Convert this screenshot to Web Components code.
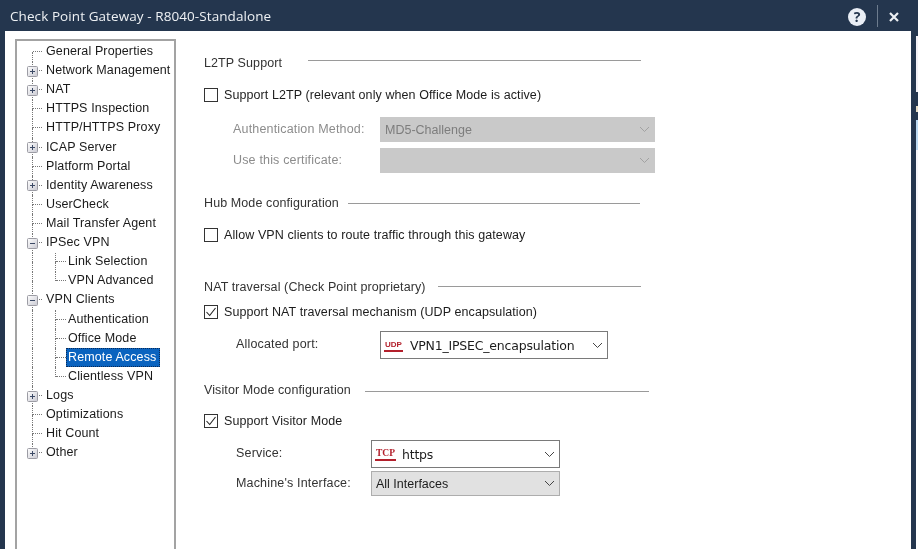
<!DOCTYPE html>
<html lang="en">
<head>
<meta charset="utf-8">
<title>Check Point Gateway - R8040-Standalone</title>
<style>
html, body { margin: 0; padding: 0; background: #fff; }
body { font-family: "Liberation Sans", Arial, sans-serif; }
</style>
</head>
<body>
<gateway-window>
  <span slot="title">Check Point Gateway - R8040-Standalone</span>
  <nav-tree slot="tree">
    <tree-row pos="first">General Properties</tree-row>
    <tree-row exp="plus">Network Management</tree-row>
    <tree-row exp="plus">NAT</tree-row>
    <tree-row>HTTPS Inspection</tree-row>
    <tree-row>HTTP/HTTPS Proxy</tree-row>
    <tree-row exp="plus">ICAP Server</tree-row>
    <tree-row>Platform Portal</tree-row>
    <tree-row exp="plus">Identity Awareness</tree-row>
    <tree-row>UserCheck</tree-row>
    <tree-row>Mail Transfer Agent</tree-row>
    <tree-row exp="minus">IPSec VPN</tree-row>
    <tree-row level="1">Link Selection</tree-row>
    <tree-row level="1" pos="last">VPN Advanced</tree-row>
    <tree-row exp="minus">VPN Clients</tree-row>
    <tree-row level="1">Authentication</tree-row>
    <tree-row level="1">Office Mode</tree-row>
    <tree-row level="1" selected>Remote Access</tree-row>
    <tree-row level="1" pos="last">Clientless VPN</tree-row>
    <tree-row exp="plus">Logs</tree-row>
    <tree-row>Optimizations</tree-row>
    <tree-row>Hit Count</tree-row>
    <tree-row exp="plus" pos="last">Other</tree-row>
  </nav-tree>

  <group-heading style="--line:333px;--gap:26px;--db:3px">L2TP Support</group-heading>
  <check-row style="margin-top:18px">Support L2TP (relevant only when Office Mode is active)</check-row>
  <form-row label="Authentication Method:" disabled style="margin-top:15px;--indent:29px;--label:147px;--lift:1px">
    <drop-down kind="disabled" style="--w:275px;--h:25px">MD5-Challenge</drop-down>
  </form-row>
  <form-row label="Use this certificate:" disabled style="margin-top:6px;--indent:29px;--label:147px;--lift:1px">
    <drop-down kind="disabled" style="--w:275px;--h:25px"></drop-down>
  </form-row>

  <group-heading style="margin-top:21px;--line:292px;--gap:9px;--dt:2px">Hub Mode configuration</group-heading>
  <check-row style="margin-top:18px">Allow VPN clients to route traffic through this gateway</check-row>

  <group-heading style="margin-top:36px;--line:203px;--gap:12px">NAT traversal (Check Point proprietary)</group-heading>
  <check-row checked style="margin-top:11px">Support NAT traversal mechanism (UDP encapsulation)</check-row>
  <form-row label="Allocated port:" style="margin-top:12px;--indent:32px;--label:144px;--lift:3px">
    <drop-down kind="white" proto="UDP" style="--w:228px;--h:28px">VPN1_IPSEC_encapsulation</drop-down>
  </form-row>

  <group-heading style="margin-top:22px;--line:284px;--gap:14px;--dt:4px">Visitor Mode configuration</group-heading>
  <check-row checked style="margin-top:17px">Support Visitor Mode</check-row>
  <form-row label="Service:" style="margin-top:12px;--indent:32px;--label:135px;--lift:3px">
    <drop-down kind="white" proto="TCP" style="--w:189px;--h:28px">https</drop-down>
  </form-row>
  <form-row label="Machine's Interface:" style="margin-top:3px;--indent:32px;--label:135px;--lift:1px">
    <drop-down kind="gray" style="--w:189px;--h:25px">All Interfaces</drop-down>
  </form-row>
</gateway-window>

<script>
class GatewayWindow extends HTMLElement {
  constructor() {
    super();
    this.attachShadow({ mode: "open" });
    this.shadowRoot.innerHTML = `
      <style>
        :host { display: flex; flex-direction: column; width: 918px; height: 549px; overflow: hidden; background: #fff; }
        .bar { flex: none; height: 31px; display: flex; align-items: center; background: #24364e; color: #eef1f4;
               font: 13.5px "Open Sans", sans-serif; padding: 0 0 0 10px; }
        .title { flex: 1; letter-spacing: .08px; filter: blur(.35px); }
        .help { width: 18px; height: 18px; border-radius: 50%; background: #e9eef5; color: #24364e; display: flex;
                align-items: center; justify-content: center; font: bold 14px "Open Sans", sans-serif; margin-top: 2px; filter: blur(.35px); }
        .sep { width: 1px; height: 22px; background: #6d7c8e; margin: 0 11px 0 11px; }
        .close { display: block; margin: 2px 19px 0 0; filter: blur(.35px); }
        .main { flex: 1; min-height: 0; display: flex; }
        .edge { flex: none; width: 5px; background: #24364e; }
        .content { flex: 1; min-width: 0; display: flex; background: #fff; filter: blur(.35px); }
        .tree { flex: none; padding: 8px 0 0 10px; }
        .panel { flex: 1; min-width: 0; padding: 23px 0 0 28px; color: #1c1c1c; }
        .strip { flex: none; width: 2px; display: flex; flex-direction: column; margin-top: 0; }
        .strip i { display: block; }
      </style>
      <div class="bar">
        <div class="title"><slot name="title"></slot></div>
        <div class="help">?</div>
        <div class="sep"></div>
        <svg class="close" width="10" height="10" viewBox="0 0 10 10"><path d="M1 1 9 9M9 1 1 9" stroke="#eef1f4" stroke-width="2.2" fill="none"/></svg>
      </div>
      <div class="main">
        <div class="edge"></div>
        <div class="content">
          <div class="tree"><slot name="tree"></slot></div>
          <div class="panel"><slot></slot></div>
        </div>
        <div class="edge"></div>
        <div class="strip">
          <i style="height:5px;background:#24364e"></i>
          <i style="height:56px;background:#f3f1f6"></i>
          <i style="height:14px;background:#24364e"></i>
          <i style="height:6px;background:#e9dfc8"></i>
          <i style="height:8px;background:#24364e"></i>
          <i style="height:30px;background:#bcd9f2"></i>
          <i style="height:270px;background:#f7f6fa"></i>
          <i style="flex:1;background:#fff"></i>
        </div>
      </div>`;
  }
}

class NavTree extends HTMLElement {
  constructor() {
    super();
    this.attachShadow({ mode: "open" });
    this.shadowRoot.innerHTML = `
      <style>
        :host { display: block; box-sizing: border-box; width: 161px; height: 530px; background: #fff;
                border: 2px solid #a3a3a3; border-bottom: 0; padding: 1.5px 0 0 6px;
                font: 12.5px "Liberation Sans", Arial, sans-serif; color: #1a1a1a; }
      </style>
      <slot></slot>`;
  }
}

class TreeRow extends HTMLElement {
  constructor() {
    super();
    this.attachShadow({ mode: "open" });
    const level = this.getAttribute("level") === "1";
    const exp = this.getAttribute("exp");
    // the top level line runs past the children, so level 1 rows get a plain guide first
    const guide = level ? `<div class="cell pass"><b class="tl"></b><b class="bl"></b></div>` : "";
    const mark = exp
      ? `<svg class="exp" width="11" height="11" viewBox="0 0 11 11">
           <defs><linearGradient id="g" x1="0" y1="0" x2="1" y2="1"><stop offset="0" stop-color="#fff"/><stop offset="1" stop-color="#c9c9d2"/></linearGradient></defs>
           <rect x=".5" y=".5" width="10" height="10" rx="1" fill="url(#g)" stroke="#9c9ca4"/>
           <path d="${exp === "plus" ? "M3 5.5h5M5.5 3v5" : "M3 5.5h5"}" stroke="#3c4a66"/>
         </svg>`
      : "";
    this.shadowRoot.innerHTML = `
      <style>
        :host { display: flex; height: 19.12px; align-items: stretch; }
        .cell { flex: none; width: 21px; display: grid; grid-template-columns: 10px 9px; grid-template-rows: 1fr 1fr; }
        .cell.pass { width: 22px; }
        .cell.sub { grid-template-columns: 11px 10px; }
        b { display: block; box-sizing: border-box; }
        .tl { grid-area: 1 / 1; border-right: 1px dotted #777; }
        .tr { grid-area: 1 / 2; border-bottom: 1px dotted #777; }
        .bl { grid-area: 2 / 1; border-right: 1px dotted #777; }
        :host([pos=first]) .main .tl, :host([pos=last]) .main .bl { border-right-color: transparent; }
        .exp { grid-area: 1 / 1 / 3 / 3; align-self: center; justify-self: start; margin-left: 4px; z-index: 1; }
        .label { align-self: center; white-space: nowrap; padding: 1px 2px 2px; line-height: 15px; letter-spacing: .12px; }
        :host([selected]) .label { background: #0a63bf; color: #fff; outline: 1px dotted #0b2a55; outline-offset: -1px; padding: 2px 4px 2px 2px; }
      </style>
      ${guide}
      <div class="cell main ${level ? "sub" : ""}">
        <b class="tl"></b><b class="tr"></b><b class="bl"></b>
        ${mark}
      </div>
      <div class="label"><slot></slot></div>`;
  }
}

class GroupHeading extends HTMLElement {
  constructor() {
    super();
    this.attachShadow({ mode: "open" });
    this.shadowRoot.innerHTML = `
      <style>
        :host { display: flex; align-items: center; height: 16px; color: #333; font: 12.5px "Liberation Sans", Arial, sans-serif; letter-spacing: .1px; }
        span { margin-top: 2px; }
        i { display: block; height: 1px; width: var(--line); margin: var(--dt, 0) 0 var(--db, 0) var(--gap); background: #9a9a9a; }
      </style>
      <span><slot></slot></span><i></i>`;
  }
}

class CheckRow extends HTMLElement {
  constructor() {
    super();
    this.attachShadow({ mode: "open" });
    const tick = this.hasAttribute("checked") ? `<path d="M2.5 7 5.700 10.500 11.500 3" stroke="#222" stroke-width="1.100" fill="none"/>` : "";
    this.shadowRoot.innerHTML = `
      <style>
        :host { display: flex; align-items: center; height: 14px; gap: 6px; color: #1c1c1c; font: 12.5px "Liberation Sans", Arial, sans-serif; letter-spacing: .09px; white-space: nowrap; }
        svg { flex: none; }
      </style>
      <svg width="14" height="14" viewBox="0 0 14 14"><rect x=".5" y=".5" width="13" height="13" fill="#fff" stroke="#333"/>${tick}</svg>
      <span><slot></slot></span>`;
  }
}

class FormRow extends HTMLElement {
  constructor() {
    super();
    this.attachShadow({ mode: "open" });
    this.shadowRoot.innerHTML = `
      <style>
        :host { display: flex; align-items: center; padding-left: var(--indent); color: #333; font: 12.5px "Liberation Sans", Arial, sans-serif; white-space: nowrap; }
        :host([disabled]) { color: #8c8c8c; }
        .lab { flex: none; width: var(--label); margin-bottom: var(--lift, 3px); letter-spacing: .17px; }
      </style>
      <div class="lab"></div><slot></slot>`;
    this.shadowRoot.querySelector(".lab").textContent = this.getAttribute("label");
  }
}

class DropDown extends HTMLElement {
  constructor() {
    super();
    this.attachShadow({ mode: "open" });
    const proto = this.getAttribute("proto");
    this.shadowRoot.innerHTML = `
      <style>
        :host { display: flex; align-items: center; box-sizing: border-box; width: var(--w); height: var(--h); padding: 0 4px 0 4px; color: #1c1c1c;
                font: 12.5px "Liberation Sans", Arial, sans-serif; border: 1px solid #7a7a7a; background: #fff; }
        :host([kind=disabled]) { background: #c9c9c9; border-color: #c9c9c9; color: #7d7d7d; }
        :host([kind=gray]) { background: #e1e1e1; border-color: #adadad; }
        .val { flex: 1; min-width: 0; }
        :host([proto]) .val { font: 12.5px "DejaVu Sans", sans-serif; margin-left: 7px; letter-spacing: -.2px; }
        :host([proto=TCP]) .val { margin-left: 6px; }
        .proto { flex: none; color: #b3202c; border-bottom: 2px solid #b3202c; padding: 0 1px; margin-left: -1px; }
        :host([proto=UDP]) .proto { font: bold 8px/11px "Liberation Sans", sans-serif; }
        :host([proto=TCP]) .proto { font: bold 9.5px/11px "Liberation Serif", serif; }
        svg { flex: none; }
      </style>
      ${proto ? `<span class="proto">${proto}</span>` : ""}
      <span class="val"><slot></slot></span>
      <svg width="11" height="7" viewBox="0 0 11 7"><path d="M1 1 5.500 5.500 10 1" stroke="${this.getAttribute("kind") === "disabled" ? "#a2a2a2" : "#444"}" fill="none"/></svg>`;
  }
}

customElements.define("gateway-window", GatewayWindow);
customElements.define("nav-tree", NavTree);
customElements.define("tree-row", TreeRow);
customElements.define("group-heading", GroupHeading);
customElements.define("check-row", CheckRow);
customElements.define("form-row", FormRow);
customElements.define("drop-down", DropDown);
</script>
</body>
</html>
